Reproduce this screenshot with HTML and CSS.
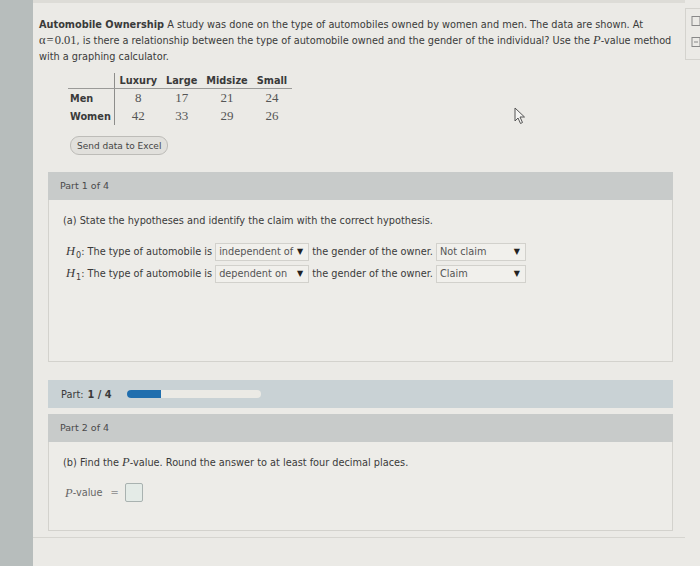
FILE: index.html
```html
<!DOCTYPE html>
<html>
<head>
	<meta charset="utf-8">
	<title>Automobile Ownership</title>
	<link rel="stylesheet" href="styles.css">
</head>
<body>
	<div class="rail"></div>
	<div class="page">
		<p class="intro"><b>Automobile Ownership</b> A study was done on the type of automobiles owned by women and men. The data are shown. At <span class="math">α<span class="eq">=</span>0.01</span>, is there a relationship between the type of automobile owned and the gender of the individual? Use the <i class="math">P</i>-value method with a graphing calculator.</p>

		<table class="data">
			<thead>
				<tr><th></th><th>Luxury</th><th>Large</th><th>Midsize</th><th>Small</th></tr>
			</thead>
			<tbody>
				<tr><th>Men</th><td>8</td><td>17</td><td>21</td><td>24</td></tr>
				<tr><th>Women</th><td>42</td><td>33</td><td>29</td><td>26</td></tr>
			</tbody>
		</table>

		<button class="excel">Send data to Excel</button>

		<div class="part">
			<div class="part-head">Part 1 of 4</div>
			<div class="part-body tall">
				<p class="question">(a) State the hypotheses and identify the claim with the correct hypothesis.</p>
				<div class="hyp">
					<i class="math">H</i><sub>0</sub>: The type of automobile is
					<span class="select">independent of <span class="arrow">▼</span></span>
					the gender of the owner.
					<span class="select claim">Not claim <span class="arrow">▼</span></span>
				</div>
				<div class="hyp">
					<i class="math">H</i><sub>1</sub>: The type of automobile is
					<span class="select">dependent on <span class="arrow">▼</span></span>
					the gender of the owner.
					<span class="select claim">Claim <span class="arrow">▼</span></span>
				</div>
			</div>
		</div>

		<div class="progress">
			Part: <b>1 / 4</b>
			<div class="bar"><div class="fill" style="width: 25%"></div></div>
		</div>

		<div class="part">
			<div class="part-head">Part 2 of 4</div>
			<div class="part-body">
				<p class="question">(b) Find the <i class="math">P</i>-value. Round the answer to at least four decimal places.</p>
				<div class="answer">
					<i class="math">P</i>-value <span class="equals">=</span> <span class="input"></span>
				</div>
			</div>
		</div>

		<svg class="cursor" width="12" height="18" viewBox="0 0 12 18">
			<path d="M1 1 L1 14 L4 11 L6.5 16.5 L8.5 15.5 L6 10 L10.5 10 Z" fill="#f4f4f2" stroke="#555" stroke-width="1"/>
		</svg>
	</div>
	<div class="sidebar">
		<div class="tools">
			<svg width="12" height="12" viewBox="0 0 12 12"><rect x="2" y="1.5" width="8" height="9" fill="none" stroke="#888" stroke-width="1"/></svg>
			<svg width="12" height="12" viewBox="0 0 12 12"><rect x="2" y="1.5" width="8" height="9" fill="none" stroke="#888" stroke-width="1"/><path d="M4 6 H8" stroke="#888"/></svg>
		</div>
	</div>
</body>
</html>
```

FILE: styles.css
```css
html, body {
	margin: 0;
	padding: 0;
	height: 100%;
}
body {
	background: #ebeae6;
	color: #3a3a3a;
	display: flex;
	font: 9.75px "DejaVu Sans", Verdana, sans-serif;
	overflow: hidden;
}
.rail {
	background: #b7bdbc;
	width: 33px;
	flex: none;
}
.page {
	border-top: 3px solid #dddcd7;
	border-bottom: 1px solid #d6d5d0;
	flex: 1;
	height: 534px;
	padding: 0 12px 0 6px;
	position: relative;
}
.intro {
	line-height: 16px;
	margin: 14px -9px 0 0;
}
.math {
	font-family: "Liberation Serif", "Times New Roman", serif;
	font-size: 12.5px;
	line-height: 10px;
}
.eq {
	margin: 0 1px;
}
.data {
	border-collapse: collapse;
	margin: 8px 0 0 29px;
}
.data th {
	font-weight: bold;
	padding: 0;
	text-align: left;
}
.data thead th {
	border-bottom: 1px solid #9a9a98;
	height: 15px;
	padding: 0 4.5px;
	text-align: center;
}
.data thead th:first-child {
	width: 37px;
}
.data tbody th {
	height: 18px;
	padding-left: 2px;
}
.data tr > :first-child {
	border-right: 1px solid #8d8d8b;
}
.data td {
	color: #555;
	font-family: "Liberation Serif", "Times New Roman", serif;
	font-size: 13px;
	padding: 0;
	text-align: center;
}
.excel {
	background: #e1e0dc;
	border: 1px solid #bdbcb8;
	border-radius: 9px;
	color: #444;
	display: block;
	font: 9px "DejaVu Sans", Verdana, sans-serif;
	height: 19px;
	margin: 11px 0 0 31px;
	padding: 0 6px;
}
.part {
	margin-left: 9px;
}
.excel + .part {
	margin-top: 17px;
}
.part-head {
	background: #c8cbca;
	color: #4a4a4a;
	font-size: 9.5px;
	height: 28px;
	line-height: 28px;
	padding-left: 12px;
}
.part-body {
	background: #edece8;
	border: 1px solid #d3d2cd;
	border-top: none;
	height: 89px;
	padding: 15px 0 0 14px;
	box-sizing: border-box;
}
.part-body.tall {
	height: 162px;
}
.question {
	margin: 0 0 15px;
}
.hyp {
	height: 22px;
	line-height: 22px;
	padding-left: 3px;
}
.hyp sub {
	font-size: 8px;
	line-height: 0;
	margin-left: 1px;
	vertical-align: -3px;
}
.select {
	background: #f1f0ec;
	border: 1px solid #d2d1cc;
	box-sizing: border-box;
	color: #555;
	display: inline-flex;
	height: 18px;
	justify-content: space-between;
	line-height: 16px;
	padding: 0 5px 0 3px;
	vertical-align: middle;
	width: 94px;
}
.select.claim {
	width: 90px;
}
.select .arrow {
	color: #222;
	font-size: 8px;
}
.progress {
	align-items: center;
	background: #c9d2d5;
	display: flex;
	height: 28px;
	margin: 18px 0 6px 9px;
	padding-left: 13px;
}
.progress b {
	margin-left: 4px;
}
.bar {
	background: #ebeae5;
	border-radius: 4px;
	height: 8px;
	margin-left: 16px;
	overflow: hidden;
	width: 134px;
}
.fill {
	background: #1f6eae;
	height: 100%;
}
.answer {
	align-items: center;
	color: #666;
	display: flex;
	padding-left: 2px;
}
.equals {
	color: #999;
	margin: 0 6px 0 8px;
}
.input {
	background: #e4ebe7;
	border: 1px solid #a9b2b0;
	border-radius: 2px;
	height: 17px;
	width: 16px;
}
.cursor {
	left: 481px;
	position: absolute;
	top: 104px;
}
.sidebar {
	flex: none;
	padding-top: 8px;
	width: 15px;
}
.tools {
	border: 1px solid #d4d3ce;
	border-right: none;
	display: flex;
	flex-direction: column;
	gap: 9px;
	height: 52px;
	padding: 6px 0 0 4px;
	box-sizing: border-box;
}
```
